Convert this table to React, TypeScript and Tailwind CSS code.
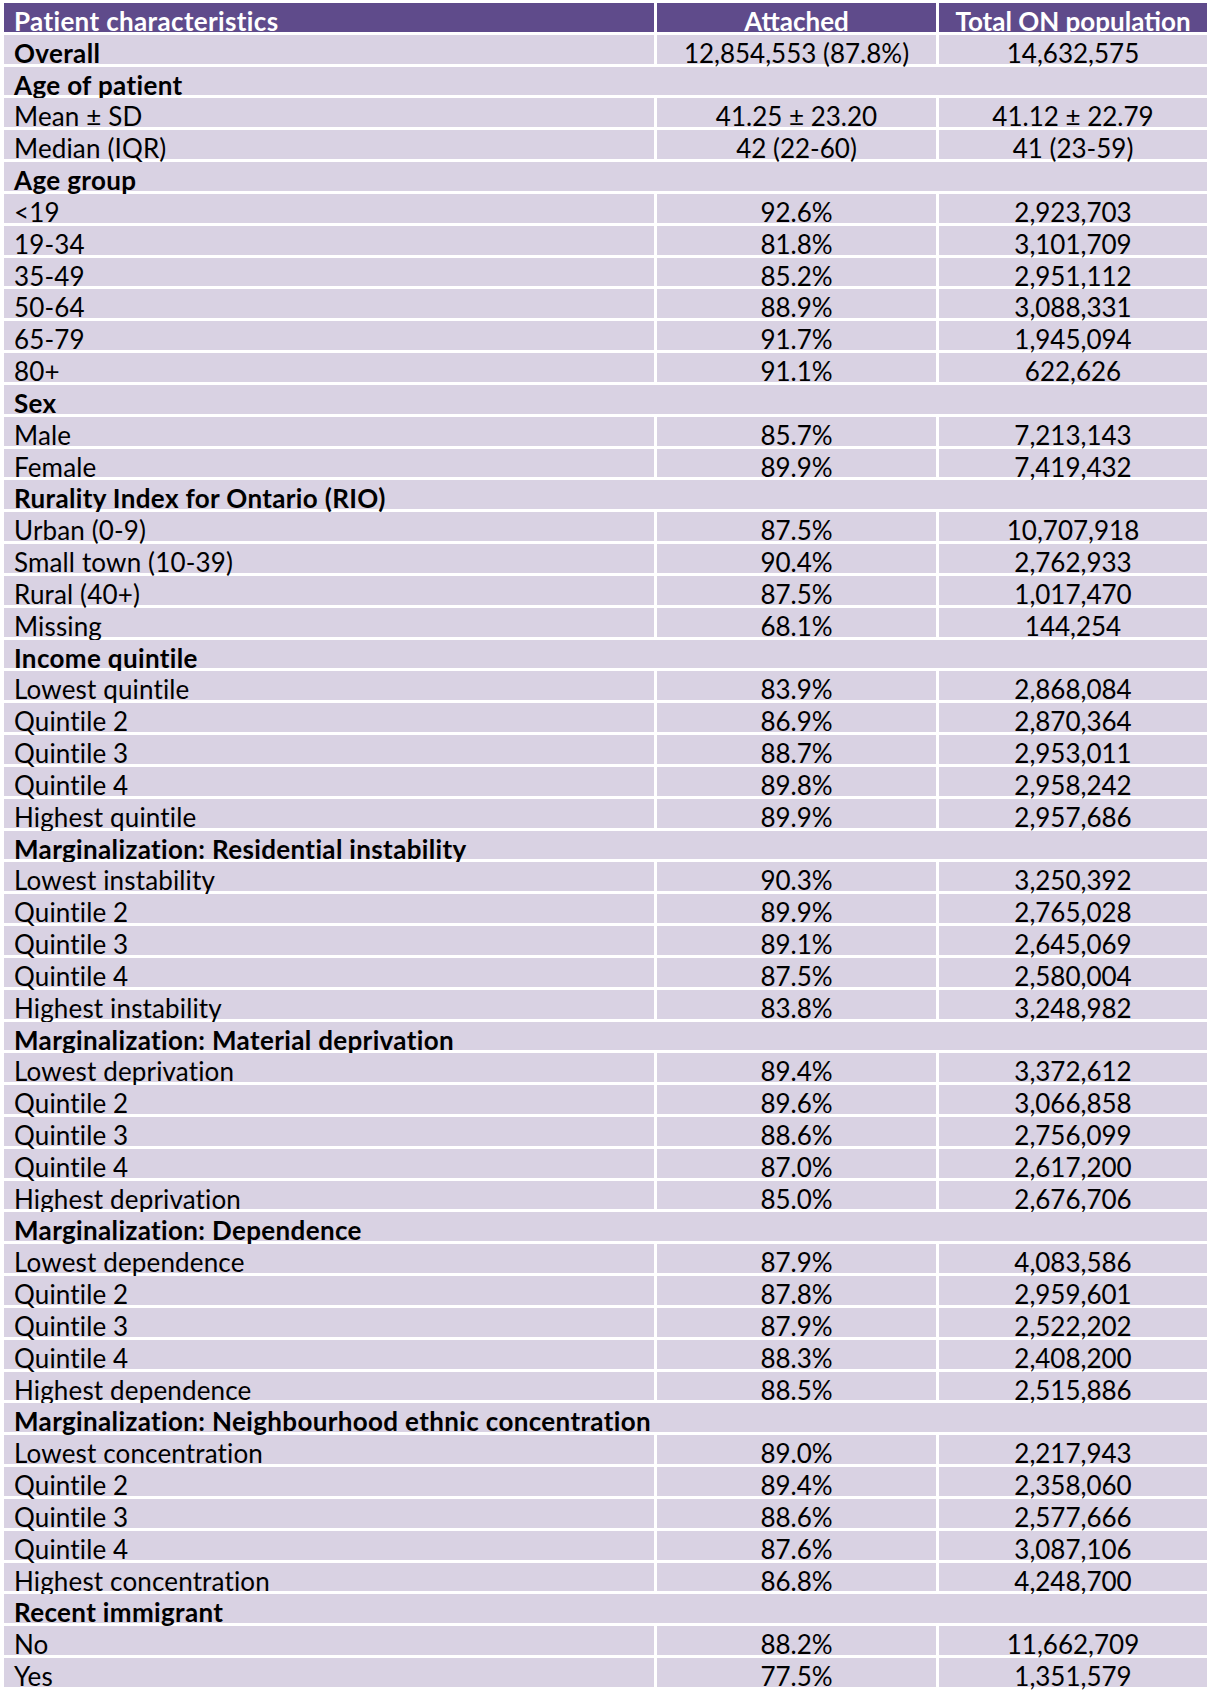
import React from "react";

type Row =
  | { kind: "section"; label: string }
  | { kind: "data"; label: string; a: string; b: string; bold?: boolean };

const S = (label: string): Row => ({ kind: "section", label });
const D = (label: string, a: string, b: string, bold = false): Row => ({ kind: "data", label, a, b, bold });

const rows: Row[] = [
  D("Overall", "12,854,553 (87.8%)", "14,632,575", true),
  S("Age of patient"),
  D("Mean ± SD", "41.25 ± 23.20", "41.12 ± 22.79"),
  D("Median (IQR)", "42 (22-60)", "41 (23-59)"),
  S("Age group"),
  D("<19", "92.6%", "2,923,703"),
  D("19-34", "81.8%", "3,101,709"),
  D("35-49", "85.2%", "2,951,112"),
  D("50-64", "88.9%", "3,088,331"),
  D("65-79", "91.7%", "1,945,094"),
  D("80+", "91.1%", "622,626"),
  S("Sex"),
  D("Male", "85.7%", "7,213,143"),
  D("Female", "89.9%", "7,419,432"),
  S("Rurality Index for Ontario (RIO)"),
  D("Urban (0-9)", "87.5%", "10,707,918"),
  D("Small town (10-39)", "90.4%", "2,762,933"),
  D("Rural (40+)", "87.5%", "1,017,470"),
  D("Missing", "68.1%", "144,254"),
  S("Income quintile"),
  D("Lowest quintile", "83.9%", "2,868,084"),
  D("Quintile 2", "86.9%", "2,870,364"),
  D("Quintile 3", "88.7%", "2,953,011"),
  D("Quintile 4", "89.8%", "2,958,242"),
  D("Highest quintile", "89.9%", "2,957,686"),
  S("Marginalization: Residential instability"),
  D("Lowest instability", "90.3%", "3,250,392"),
  D("Quintile 2", "89.9%", "2,765,028"),
  D("Quintile 3", "89.1%", "2,645,069"),
  D("Quintile 4", "87.5%", "2,580,004"),
  D("Highest instability", "83.8%", "3,248,982"),
  S("Marginalization: Material deprivation"),
  D("Lowest deprivation", "89.4%", "3,372,612"),
  D("Quintile 2", "89.6%", "3,066,858"),
  D("Quintile 3", "88.6%", "2,756,099"),
  D("Quintile 4", "87.0%", "2,617,200"),
  D("Highest deprivation", "85.0%", "2,676,706"),
  S("Marginalization: Dependence"),
  D("Lowest dependence", "87.9%", "4,083,586"),
  D("Quintile 2", "87.8%", "2,959,601"),
  D("Quintile 3", "87.9%", "2,522,202"),
  D("Quintile 4", "88.3%", "2,408,200"),
  D("Highest dependence", "88.5%", "2,515,886"),
  S("Marginalization: Neighbourhood ethnic concentration"),
  D("Lowest concentration", "89.0%", "2,217,943"),
  D("Quintile 2", "89.4%", "2,358,060"),
  D("Quintile 3", "88.6%", "2,577,666"),
  D("Quintile 4", "87.6%", "3,087,106"),
  D("Highest concentration", "86.8%", "4,248,700"),
  S("Recent immigrant"),
  D("No", "88.2%", "11,662,709"),
  D("Yes", "77.5%", "1,351,579"),
];

const cell = "h-[28.83px] pt-[4px] leading-[28px] whitespace-nowrap";
const boldLabel = "font-bold tracking-[0.35px]";

export default function App() {
  return (
    <div className="bg-white w-[1212px] min-h-[1692px] pt-[3px] pl-[4px] font-['Lato',sans-serif] text-[26px] text-black">
      <div className="grid w-[1203px] grid-cols-[650px_279px_268px] gap-[3px]">
        <div className={`${cell} bg-[#5f4b8b] text-white ${boldLabel} pl-[10px]`}>Patient characteristics</div>
        <div className={`${cell} bg-[#5f4b8b] text-white font-bold text-center`}>Attached</div>
        <div className={`${cell} bg-[#5f4b8b] text-white font-bold text-center`}>Total ON population</div>
        {rows.map((r, i) =>
          r.kind === "section" ? (
            <div key={i} className={`${cell} col-span-3 bg-[#d9d2e3] ${boldLabel} pl-[10px]`}>
              {r.label}
            </div>
          ) : (
            <React.Fragment key={i}>
              <div className={`${cell} bg-[#d9d2e3] pl-[10px] ${r.bold ? boldLabel : "tracking-[0.15px]"}`}>{r.label}</div>
              <div className={`${cell} bg-[#d9d2e3] text-center`}>{r.a}</div>
              <div className={`${cell} bg-[#d9d2e3] text-center`}>{r.b}</div>
            </React.Fragment>
          )
        )}
      </div>
    </div>
  );
}
